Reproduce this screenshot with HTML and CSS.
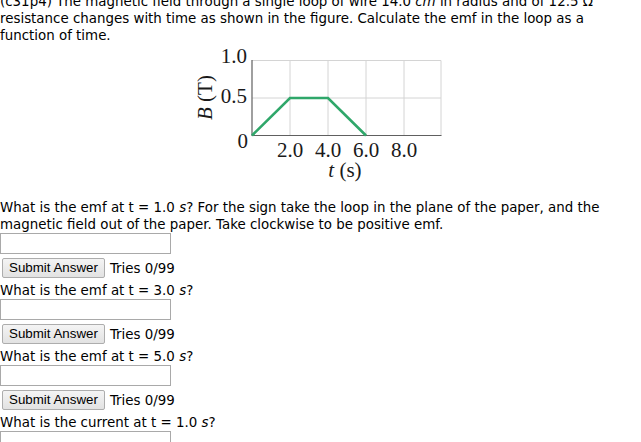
FILE: index.html
```html
<!DOCTYPE html>
<html>
<head>
<meta charset="utf-8">
<link rel="stylesheet" href="styles.css">
</head>
<body>
<div class="page">
  <p class="intro">(c31p4) The magnetic field through a single loop of wire 14.0 <i>cm</i> in radius and of 12.5 Ω<br>resistance changes with time as shown in the figure. Calculate the emf in the loop as a<br>function of time.</p>
  <div class="figure">
    <svg class="graph" width="250" height="155" viewBox="0 0 250 155" xmlns="http://www.w3.org/2000/svg">
      <g class="grid">
        <line x1="56" y1="16.5" x2="245" y2="16.5"/>
        <line x1="56" y1="54" x2="245" y2="54"/>
        <line x1="94" y1="16.5" x2="94" y2="91.5"/>
        <line x1="132" y1="16.5" x2="132" y2="91.5"/>
        <line x1="170" y1="16.5" x2="170" y2="91.5"/>
        <line x1="208" y1="16.5" x2="208" y2="91.5"/>
        <line x1="245" y1="16.5" x2="245" y2="91.5"/>
      </g>
      <g class="axis">
        <line x1="56" y1="16" x2="56" y2="92"/>
        <line x1="56" y1="91.5" x2="245.5" y2="91.5"/>
      </g>
      <polyline class="curve" points="56,91.5 94,54 132,54 170,91.5"/>
      <g class="labels">
        <text x="51" y="19" text-anchor="end">1.0</text>
        <text x="51" y="59" text-anchor="end">0.5</text>
        <text x="52" y="104" text-anchor="end">0</text>
        <text x="94" y="112.5" text-anchor="middle">2.0</text>
        <text x="132" y="112.5" text-anchor="middle">4.0</text>
        <text x="170" y="112.5" text-anchor="middle">6.0</text>
        <text x="208" y="112.5" text-anchor="middle">8.0</text>
        <text x="149" y="133" text-anchor="middle"><tspan font-style="italic">t</tspan> (s)</text>
        <text transform="translate(15.5 53.5) rotate(-90)" text-anchor="middle"><tspan font-style="italic">B</tspan> (T)</text>
      </g>
    </svg>
  </div>

  <div class="question">
    <p class="qtext">What is the emf at t = 1.0 <i>s</i>? For the sign take the loop in the plane of the paper, and the<br>magnetic field out of the paper. Take clockwise to be positive emf.</p>
    <input class="answer" type="text">
    <div class="submit-row"><button class="submit" type="button">Submit Answer</button><span class="tries">Tries 0/99</span></div>
  </div>

  <div class="question">
    <p class="qtext">What is the emf at t = 3.0 <i>s</i>?</p>
    <input class="answer" type="text">
    <div class="submit-row"><button class="submit" type="button">Submit Answer</button><span class="tries">Tries 0/99</span></div>
  </div>

  <div class="question">
    <p class="qtext">What is the emf at t = 5.0 <i>s</i>?</p>
    <input class="answer" type="text">
    <div class="submit-row"><button class="submit" type="button">Submit Answer</button><span class="tries">Tries 0/99</span></div>
  </div>

  <div class="question">
    <p class="qtext">What is the current at t = 1.0 <i>s</i>?</p>
    <input class="answer" type="text">
  </div>
</div>
</body>
</html>
```

FILE: styles.css
```css
html, body {
  margin: 0;
  padding: 0;
  background: #ffffff;
}

body {
  font-family: "DejaVu Sans", Verdana, sans-serif;
  font-size: 13.4px;
  line-height: 17px;
  color: #000000;
  overflow: hidden;
}

.page {
  margin-top: -7px;
}

.intro,
.qtext {
  margin: 0;
  white-space: nowrap;
}

.figure {
  height: 155px;
  display: flex;
  justify-content: center;
}

.graph {
  display: block;
}

.grid line {
  stroke: #d4d4d4;
  stroke-width: 1;
}

.axis line {
  stroke: #606060;
  stroke-width: 1.2;
}

.curve {
  fill: none;
  stroke: #2fa76a;
  stroke-width: 2.6;
  stroke-linejoin: miter;
}

.labels text {
  font-family: "Liberation Serif", "Times New Roman", serif;
  font-size: 21px;
  fill: #1a1a1a;
}

.answer {
  display: block;
  box-sizing: border-box;
  width: 171px;
  height: 21px;
  margin: 0;
  padding: 1px 2px;
  border: 1px solid #a9a9a9;
  background: #ffffff;
  font: 13px "DejaVu Sans", sans-serif;
}

.submit-row {
  height: 28px;
  display: flex;
  align-items: center;
  gap: 5px;
}

.submit {
  box-sizing: border-box;
  height: 20px;
  margin: 0 0 0 2px;
  padding: 0 6px;
  border: 1px solid #adadad;
  border-radius: 2px;
  background: linear-gradient(#f4f4f4, #e2e2e2);
  color: #000000;
  font-family: "Liberation Sans", Arial, sans-serif;
  font-size: 13.33px;
  line-height: 18px;
}

.tries {
  white-space: nowrap;
}
```
